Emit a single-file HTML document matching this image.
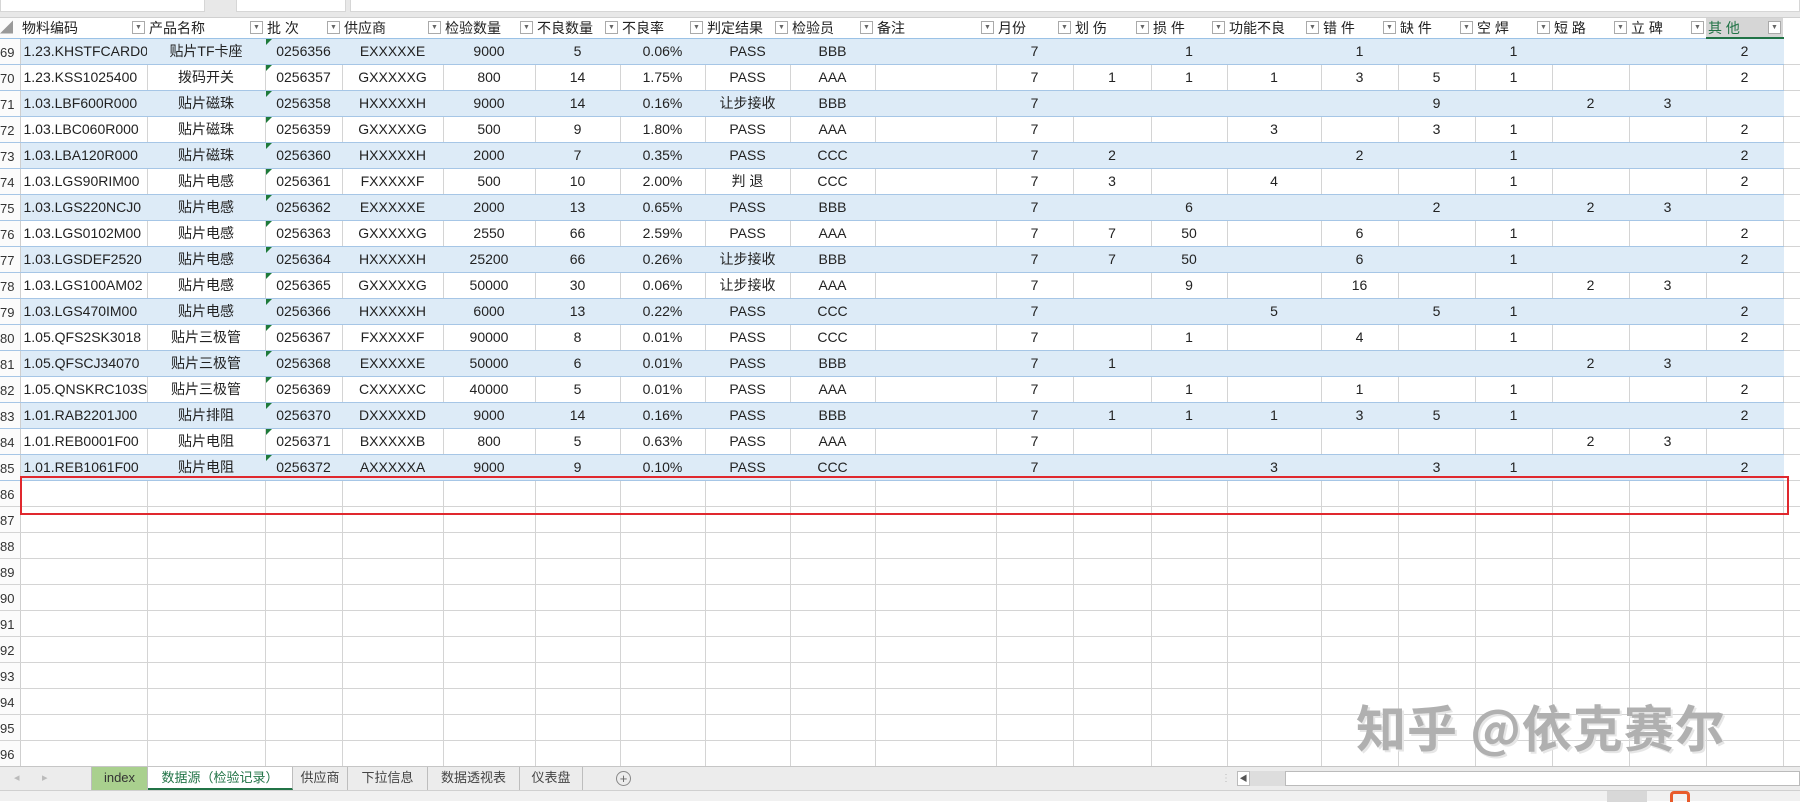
<!DOCTYPE html>
<html><head><meta charset="utf-8">
<style>
*{margin:0;padding:0;box-sizing:border-box}
body{width:1800px;height:801px;overflow:hidden;background:#fff;position:relative;font-family:"Liberation Sans","Noto Sans CJK SC",sans-serif;font-size:14px;color:#222}
.top{position:absolute;left:0;top:0;width:1800px;height:18px;background:#e8e8e8;border-bottom:1px solid #d0d0d0}
.top div{position:absolute;top:0;height:12px;background:#fff;border:1px solid #d6d6d6;border-top:none}
table{position:absolute;left:0;top:18px;border-collapse:collapse;table-layout:fixed;width:1800px}
td{height:26px;max-height:26px;padding:0 3px;white-space:nowrap;overflow:hidden;text-align:center;border-right:1px solid #d4d4d4;border-bottom:1px solid #d4d4d4;line-height:22px;vertical-align:middle}
tr.h td{height:20px;line-height:16px;text-align:left;position:relative;border-bottom:1px solid #9bc2e6;border-right:none;padding-left:2px}
tr.h td span.dd{position:absolute;right:2px;top:3px;width:13px;height:13px;border:1px solid #aaa;background:#fff;font-size:7px;line-height:11px;text-align:center;color:#666}
td.rh{text-align:left;padding:4px 0 0 0;font-size:13px;color:#333;border-right:1px solid #cfcfcf;line-height:20px;background:#fbfbfb}
tr.d td{border-bottom:1px solid #a6c6e6}
tr.b td{background:#ddebf7;border-right-color:#ddebf7}
tr.b td.rh{background:#fbfbfb;border-right-color:#cfcfcf}
td.l{text-align:left}
td.c3{position:relative}
td.c3:before{content:"";position:absolute;left:0;top:0;border-top:6px solid #1e7a3a;border-right:6px solid transparent}
.red{position:absolute;left:20px;top:476px;width:1769px;height:39px;border:2px solid #e0282e}
.wm{position:absolute;left:1356px;top:696px;font-size:50px;line-height:60px;color:#b0b0b0;font-family:"Noto Sans CJK SC",sans-serif;font-weight:bold;letter-spacing:1px;text-shadow:2px 2px 0 #e6e6e6}
.tabs{position:absolute;left:0;top:766px;width:1800px;height:24px;background:#ececec;border-top:1px solid #c6c6c6;font-size:13px}
.tab{position:absolute;top:0;height:23px;line-height:22px;text-align:center;border-right:1px solid #bdbdbd;color:#444}
.status{position:absolute;left:0;top:790px;width:1800px;height:11px;background:#f1f1f1;border-top:1px solid #d0d0d0}
</style></head><body>
<div class="top"><div style="left:0;width:205px"></div><div style="left:236px;width:110px"></div><div style="left:350px;width:1450px"></div></div>
<table>
<colgroup><col style="width:20px"><col style="width:127px"><col style="width:118px"><col style="width:77px"><col style="width:101px"><col style="width:92px"><col style="width:85px"><col style="width:85px"><col style="width:85px"><col style="width:85px"><col style="width:121px"><col style="width:77px"><col style="width:78px"><col style="width:76px"><col style="width:94px"><col style="width:77px"><col style="width:77px"><col style="width:77px"><col style="width:77px"><col style="width:77px"><col style="width:77px"><col style="width:17px"></colgroup>
<tr class="h"><td class="rh" style="line-height:16px;padding:0;color:#999">◢</td><td>物料编码<span class="dd">▼</span></td><td>产品名称<span class="dd">▼</span></td><td>批 次<span class="dd">▼</span></td><td>供应商<span class="dd">▼</span></td><td>检验数量<span class="dd">▼</span></td><td>不良数量<span class="dd">▼</span></td><td>不良率<span class="dd">▼</span></td><td>判定结果<span class="dd">▼</span></td><td>检验员<span class="dd">▼</span></td><td>备注<span class="dd">▼</span></td><td>月份<span class="dd">▼</span></td><td>划 伤<span class="dd">▼</span></td><td>损 件<span class="dd">▼</span></td><td>功能不良<span class="dd">▼</span></td><td>错 件<span class="dd">▼</span></td><td>缺 件<span class="dd">▼</span></td><td>空 焊<span class="dd">▼</span></td><td>短 路<span class="dd">▼</span></td><td>立 碑<span class="dd">▼</span></td><td style="background:#d6d6d6;color:#217346;border-bottom:2px solid #217346">其 他<span class="dd">▼</span></td><td style="border-bottom:none"></td></tr>
<tr class="d b"><td class="rh">69</td><td class="l">1.23.KHSTFCARD0</td><td>贴片TF卡座</td><td class="c3">0256356</td><td>EXXXXXE</td><td>9000</td><td>5</td><td>0.06%</td><td>PASS</td><td>BBB</td><td></td><td>7</td><td></td><td>1</td><td></td><td>1</td><td></td><td>1</td><td></td><td></td><td>2</td><td style="background:#fff;border-bottom-color:#d4d4d4"></td></tr>
<tr class="d"><td class="rh">70</td><td class="l">1.23.KSS1025400</td><td>拨码开关</td><td class="c3">0256357</td><td>GXXXXXG</td><td>800</td><td>14</td><td>1.75%</td><td>PASS</td><td>AAA</td><td></td><td>7</td><td>1</td><td>1</td><td>1</td><td>3</td><td>5</td><td>1</td><td></td><td></td><td>2</td><td style="border-bottom-color:#d4d4d4"></td></tr>
<tr class="d b"><td class="rh">71</td><td class="l">1.03.LBF600R000</td><td>贴片磁珠</td><td class="c3">0256358</td><td>HXXXXXH</td><td>9000</td><td>14</td><td>0.16%</td><td>让步接收</td><td>BBB</td><td></td><td>7</td><td></td><td></td><td></td><td></td><td>9</td><td></td><td>2</td><td>3</td><td></td><td style="background:#fff;border-bottom-color:#d4d4d4"></td></tr>
<tr class="d"><td class="rh">72</td><td class="l">1.03.LBC060R000</td><td>贴片磁珠</td><td class="c3">0256359</td><td>GXXXXXG</td><td>500</td><td>9</td><td>1.80%</td><td>PASS</td><td>AAA</td><td></td><td>7</td><td></td><td></td><td>3</td><td></td><td>3</td><td>1</td><td></td><td></td><td>2</td><td style="border-bottom-color:#d4d4d4"></td></tr>
<tr class="d b"><td class="rh">73</td><td class="l">1.03.LBA120R000</td><td>贴片磁珠</td><td class="c3">0256360</td><td>HXXXXXH</td><td>2000</td><td>7</td><td>0.35%</td><td>PASS</td><td>CCC</td><td></td><td>7</td><td>2</td><td></td><td></td><td>2</td><td></td><td>1</td><td></td><td></td><td>2</td><td style="background:#fff;border-bottom-color:#d4d4d4"></td></tr>
<tr class="d"><td class="rh">74</td><td class="l">1.03.LGS90RIM00</td><td>贴片电感</td><td class="c3">0256361</td><td>FXXXXXF</td><td>500</td><td>10</td><td>2.00%</td><td>判 退</td><td>CCC</td><td></td><td>7</td><td>3</td><td></td><td>4</td><td></td><td></td><td>1</td><td></td><td></td><td>2</td><td style="border-bottom-color:#d4d4d4"></td></tr>
<tr class="d b"><td class="rh">75</td><td class="l">1.03.LGS220NCJ0</td><td>贴片电感</td><td class="c3">0256362</td><td>EXXXXXE</td><td>2000</td><td>13</td><td>0.65%</td><td>PASS</td><td>BBB</td><td></td><td>7</td><td></td><td>6</td><td></td><td></td><td>2</td><td></td><td>2</td><td>3</td><td></td><td style="background:#fff;border-bottom-color:#d4d4d4"></td></tr>
<tr class="d"><td class="rh">76</td><td class="l">1.03.LGS0102M00</td><td>贴片电感</td><td class="c3">0256363</td><td>GXXXXXG</td><td>2550</td><td>66</td><td>2.59%</td><td>PASS</td><td>AAA</td><td></td><td>7</td><td>7</td><td>50</td><td></td><td>6</td><td></td><td>1</td><td></td><td></td><td>2</td><td style="border-bottom-color:#d4d4d4"></td></tr>
<tr class="d b"><td class="rh">77</td><td class="l">1.03.LGSDEF2520</td><td>贴片电感</td><td class="c3">0256364</td><td>HXXXXXH</td><td>25200</td><td>66</td><td>0.26%</td><td>让步接收</td><td>BBB</td><td></td><td>7</td><td>7</td><td>50</td><td></td><td>6</td><td></td><td>1</td><td></td><td></td><td>2</td><td style="background:#fff;border-bottom-color:#d4d4d4"></td></tr>
<tr class="d"><td class="rh">78</td><td class="l">1.03.LGS100AM02</td><td>贴片电感</td><td class="c3">0256365</td><td>GXXXXXG</td><td>50000</td><td>30</td><td>0.06%</td><td>让步接收</td><td>AAA</td><td></td><td>7</td><td></td><td>9</td><td></td><td>16</td><td></td><td></td><td>2</td><td>3</td><td></td><td style="border-bottom-color:#d4d4d4"></td></tr>
<tr class="d b"><td class="rh">79</td><td class="l">1.03.LGS470IM00</td><td>贴片电感</td><td class="c3">0256366</td><td>HXXXXXH</td><td>6000</td><td>13</td><td>0.22%</td><td>PASS</td><td>CCC</td><td></td><td>7</td><td></td><td></td><td>5</td><td></td><td>5</td><td>1</td><td></td><td></td><td>2</td><td style="background:#fff;border-bottom-color:#d4d4d4"></td></tr>
<tr class="d"><td class="rh">80</td><td class="l">1.05.QFS2SK3018</td><td>贴片三极管</td><td class="c3">0256367</td><td>FXXXXXF</td><td>90000</td><td>8</td><td>0.01%</td><td>PASS</td><td>CCC</td><td></td><td>7</td><td></td><td>1</td><td></td><td>4</td><td></td><td>1</td><td></td><td></td><td>2</td><td style="border-bottom-color:#d4d4d4"></td></tr>
<tr class="d b"><td class="rh">81</td><td class="l">1.05.QFSCJ34070</td><td>贴片三极管</td><td class="c3">0256368</td><td>EXXXXXE</td><td>50000</td><td>6</td><td>0.01%</td><td>PASS</td><td>BBB</td><td></td><td>7</td><td>1</td><td></td><td></td><td></td><td></td><td></td><td>2</td><td>3</td><td></td><td style="background:#fff;border-bottom-color:#d4d4d4"></td></tr>
<tr class="d"><td class="rh">82</td><td class="l">1.05.QNSKRC103S</td><td>贴片三极管</td><td class="c3">0256369</td><td>CXXXXXC</td><td>40000</td><td>5</td><td>0.01%</td><td>PASS</td><td>AAA</td><td></td><td>7</td><td></td><td>1</td><td></td><td>1</td><td></td><td>1</td><td></td><td></td><td>2</td><td style="border-bottom-color:#d4d4d4"></td></tr>
<tr class="d b"><td class="rh">83</td><td class="l">1.01.RAB2201J00</td><td>贴片排阻</td><td class="c3">0256370</td><td>DXXXXXD</td><td>9000</td><td>14</td><td>0.16%</td><td>PASS</td><td>BBB</td><td></td><td>7</td><td>1</td><td>1</td><td>1</td><td>3</td><td>5</td><td>1</td><td></td><td></td><td>2</td><td style="background:#fff;border-bottom-color:#d4d4d4"></td></tr>
<tr class="d"><td class="rh">84</td><td class="l">1.01.REB0001F00</td><td>贴片电阻</td><td class="c3">0256371</td><td>BXXXXXB</td><td>800</td><td>5</td><td>0.63%</td><td>PASS</td><td>AAA</td><td></td><td>7</td><td></td><td></td><td></td><td></td><td></td><td></td><td>2</td><td>3</td><td></td><td style="border-bottom-color:#d4d4d4"></td></tr>
<tr class="d b"><td class="rh">85</td><td class="l">1.01.REB1061F00</td><td>贴片电阻</td><td class="c3">0256372</td><td>AXXXXXA</td><td>9000</td><td>9</td><td>0.10%</td><td>PASS</td><td>CCC</td><td></td><td>7</td><td></td><td></td><td>3</td><td></td><td>3</td><td>1</td><td></td><td></td><td>2</td><td style="background:#fff;border-bottom-color:#d4d4d4"></td></tr>
<tr><td class="rh">86</td><td></td><td></td><td></td><td></td><td></td><td></td><td></td><td></td><td></td><td></td><td></td><td></td><td></td><td></td><td></td><td></td><td></td><td></td><td></td><td></td><td></td></tr>
<tr><td class="rh">87</td><td></td><td></td><td></td><td></td><td></td><td></td><td></td><td></td><td></td><td></td><td></td><td></td><td></td><td></td><td></td><td></td><td></td><td></td><td></td><td></td><td></td></tr>
<tr><td class="rh">88</td><td></td><td></td><td></td><td></td><td></td><td></td><td></td><td></td><td></td><td></td><td></td><td></td><td></td><td></td><td></td><td></td><td></td><td></td><td></td><td></td><td></td></tr>
<tr><td class="rh">89</td><td></td><td></td><td></td><td></td><td></td><td></td><td></td><td></td><td></td><td></td><td></td><td></td><td></td><td></td><td></td><td></td><td></td><td></td><td></td><td></td><td></td></tr>
<tr><td class="rh">90</td><td></td><td></td><td></td><td></td><td></td><td></td><td></td><td></td><td></td><td></td><td></td><td></td><td></td><td></td><td></td><td></td><td></td><td></td><td></td><td></td><td></td></tr>
<tr><td class="rh">91</td><td></td><td></td><td></td><td></td><td></td><td></td><td></td><td></td><td></td><td></td><td></td><td></td><td></td><td></td><td></td><td></td><td></td><td></td><td></td><td></td><td></td></tr>
<tr><td class="rh">92</td><td></td><td></td><td></td><td></td><td></td><td></td><td></td><td></td><td></td><td></td><td></td><td></td><td></td><td></td><td></td><td></td><td></td><td></td><td></td><td></td><td></td></tr>
<tr><td class="rh">93</td><td></td><td></td><td></td><td></td><td></td><td></td><td></td><td></td><td></td><td></td><td></td><td></td><td></td><td></td><td></td><td></td><td></td><td></td><td></td><td></td><td></td></tr>
<tr><td class="rh">94</td><td></td><td></td><td></td><td></td><td></td><td></td><td></td><td></td><td></td><td></td><td></td><td></td><td></td><td></td><td></td><td></td><td></td><td></td><td></td><td></td><td></td></tr>
<tr><td class="rh">95</td><td></td><td></td><td></td><td></td><td></td><td></td><td></td><td></td><td></td><td></td><td></td><td></td><td></td><td></td><td></td><td></td><td></td><td></td><td></td><td></td><td></td></tr>
<tr><td class="rh">96</td><td></td><td></td><td></td><td></td><td></td><td></td><td></td><td></td><td></td><td></td><td></td><td></td><td></td><td></td><td></td><td></td><td></td><td></td><td></td><td></td><td></td></tr>
</table>
<div class="red"></div>
<div class="wm">知乎 @依克赛尔</div>
<div class="tabs">
<div style="position:absolute;left:14px;top:4px;color:#bbb;font-size:11px">◂</div>
<div style="position:absolute;left:42px;top:4px;color:#bbb;font-size:11px">▸</div>
<div class="tab" style="left:91px;width:57px;background:#a9d08e;border-left:1px solid #bdbdbd;color:#333">index</div>
<div class="tab" style="left:148px;width:145px;background:#fff;color:#217346;border-bottom:2px solid #217346">数据源（检验记录）</div>
<div class="tab" style="left:293px;width:55px">供应商</div>
<div class="tab" style="left:348px;width:80px">下拉信息</div>
<div class="tab" style="left:428px;width:92px">数据透视表</div>
<div class="tab" style="left:520px;width:63px">仪表盘</div>
<div style="position:absolute;left:616px;top:4px;width:15px;height:15px;border:1px solid #888;border-radius:50%;text-align:center;line-height:13px;color:#666;font-size:13px">+</div>
<div style="position:absolute;left:1221px;top:6px;color:#bbb;font-size:10px">⋮</div>
<div style="position:absolute;left:1237px;top:4px;width:13px;height:15px;border:1px solid #bbb;background:#fff;font-size:8px;line-height:13px;text-align:center;color:#555">◀</div>
<div style="position:absolute;left:1250px;top:4px;width:35px;height:15px;background:#ddd"></div>
<div style="position:absolute;left:1285px;top:4px;width:515px;height:15px;border:1px solid #bbb;background:#fff"></div>
</div>
<div class="status"><div style="position:absolute;left:1670px;top:0;width:20px;height:11px;border:3px solid #e85a2a;border-bottom:none;border-radius:4px 4px 0 0"></div><div style="position:absolute;left:1607px;top:0;width:40px;height:11px;background:#d8d8d8"></div></div>
</body></html>
